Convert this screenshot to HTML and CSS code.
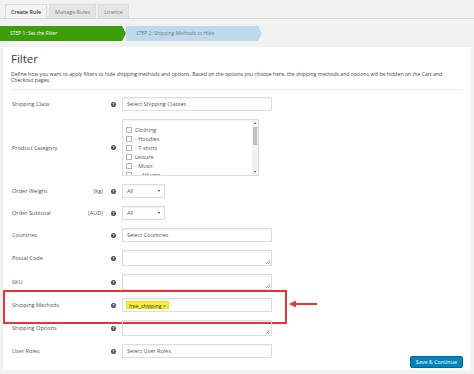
FILE: index.html
```html
<!DOCTYPE html>
<html>
<head>
    <title>Create Rule</title>
    <meta charset="utf-8">
    <link rel="stylesheet" href="styles.css">
</head>
<body>
<div class="tabs">
	<span class="tab active">Create Rule</span>
	<span class="tab">Manage Rules</span>
	<span class="tab">Licence</span>
</div>
<div class="steps">
	<div class="step done">STEP 1: Set the Filter</div>
	<div class="step next">STEP 2: Shipping Methods to Hide</div>
</div>
<div class="panel">
	<h2>Filter</h2>
	<p class="intro">Define how you want to apply filters to hide shipping methods and options. Based on the options you choose here, the shipping methods and options will be hidden on the Cart and Checkout pages.</p>
	<div class="rows">
		<div class="row">
			<div class="label"><span>Shipping Class</span></div>
			<span class="help">?</span>
			<div class="field input">Select Shipping Classes</div>
		</div>
		<div class="row">
			<div class="label"><span>Product Category</span></div>
			<span class="help">?</span>
			<div class="field multi">
				<div class="list">
					<div class="item"><span class="check"></span>Clothing</div>
					<div class="item"><span class="check"></span>- Hoodies</div>
					<div class="item"><span class="check"></span>- T-shirts</div>
					<div class="item"><span class="check"></span>Leisure</div>
					<div class="item"><span class="check"></span>- Music</div>
					<div class="item"><span class="check"></span>- - Albums</div>
				</div>
				<div class="scrollbar">
					<span class="up"></span>
					<span class="thumb"></span>
					<span class="down"></span>
				</div>
			</div>
		</div>
		<div class="row">
			<div class="label"><span>Order Weight</span><span class="unit">(kg)</span></div>
			<span class="help">?</span>
			<div class="field select">All<span class="caret"></span></div>
		</div>
		<div class="row">
			<div class="label"><span>Order Subtotal</span><span class="unit">(AUD)</span></div>
			<span class="help">?</span>
			<div class="field select">All<span class="caret"></span></div>
		</div>
		<div class="row">
			<div class="label"><span>Countries</span></div>
			<span class="help">?</span>
			<div class="field input">Select Countries</div>
		</div>
		<div class="row">
			<div class="label"><span>Postal Code</span></div>
			<span class="help">?</span>
			<div class="field input area"></div>
		</div>
		<div class="row">
			<div class="label"><span>SKU</span></div>
			<span class="help">?</span>
			<div class="field input area"></div>
		</div>
		<div class="row marked">
			<div class="label"><span>Shipping Methods</span></div>
			<span class="help">?</span>
			<div class="field input"><span class="tag">free_shipping ×</span></div>
			<svg class="pointer" width="29" height="8" viewBox="0 0 29 8">
				<path d="M6 4 H28" stroke="#e3363b" stroke-width="2"/>
				<path d="M0 4 L7 0.5 L7 7.5 Z" fill="#e3363b"/>
			</svg>
		</div>
		<div class="row">
			<div class="label"><span>Shipping Options</span></div>
			<span class="help">?</span>
			<div class="field input area"></div>
		</div>
		<div class="row">
			<div class="label"><span>User Roles</span></div>
			<span class="help">?</span>
			<div class="field input">Select User Roles</div>
		</div>
	</div>
	<div class="actions">
		<button class="save">Save &amp; Continue</button>
	</div>
</div>
</body>
</html>
```

FILE: styles.css
```css
* {
	box-sizing: border-box;
}

body {
	margin: 0;
	background: #f1f1f1;
	font-family: "Open Sans", "Noto Sans", sans-serif;
	color: #555;
}

/* tabs */
.tabs {
	display: flex;
	gap: 2px;
	height: 19px;
	padding: 4px 0 0 5px;
	border-bottom: 1px solid #d6d6d6;
}
.tab {
	padding: 0 5px;
	height: 14px;
	line-height: 14px;
	font-size: 5.4px;
	color: #777;
	background: #e4e4e4;
	border: 1px solid #dcdcdc;
	border-bottom: none;
}
.tab.active {
	background: #f3f3f3;
	color: #333;
	font-weight: 600;
}

/* steps */
.steps {
	display: flex;
	margin-top: 7px;
	height: 15px;
}
.step {
	height: 15px;
	line-height: 15px;
	padding-left: 10px;
	font-size: 5px;
	clip-path: polygon(0 0, calc(100% - 4px) 0, 100% 50%, calc(100% - 4px) 100%, 0 100%);
}
.step.done {
	width: 126px;
	background: #3e9d0b;
	color: #fff;
}
.step.next {
	width: 136px;
	background: #bcdaeb;
	color: #6a7f8c;
}

/* panel */
.panel {
	margin: 6px 3px 0 3px;
	padding: 4px 8px 2px 8px;
	background: #fff;
	box-shadow: 0 1px 1px rgba(0,0,0,.05);
}
.panel h2 {
	margin: 0;
	font-size: 11.5px;
	line-height: 15px;
	font-weight: 400;
	color: #3a3a3a;
}
.intro {
	margin: 6px 0 0 0;
	padding-bottom: 6px;
	border-bottom: 1px solid #ececec;
	font-size: 5.15px;
	line-height: 5.6px;
	color: #444;
}

/* rows */
.rows {
	display: flex;
	flex-direction: column;
	gap: 8px;
	margin-top: 7px;
}
.row {
	position: relative;
	display: flex;
	align-items: center;
}
.label {
	display: flex;
	justify-content: space-between;
	width: 91px;
	margin-left: 1px;
	font-size: 5.6px;
	color: #555;
}
.help {
	width: 5px;
	height: 5px;
	margin: 0 6px 0 8px;
	border-radius: 50%;
	background: #4a4a4a;
	color: #fff;
	font-size: 4px;
	line-height: 5px;
	font-weight: 700;
	text-align: center;
}
.field {
	border: 1px solid #ddd;
	font-size: 5.5px;
	color: #555;
	box-shadow: inset 0 1px 2px rgba(0,0,0,.06);
}
.input {
	display: flex;
	align-items: center;
	width: 150px;
	height: 14px;
	padding-left: 4px;
}
.area {
	position: relative;
	height: 16px;
}
.area::after {
	content: "";
	position: absolute;
	right: 1px;
	bottom: 1px;
	width: 4px;
	height: 4px;
	background: linear-gradient(135deg, transparent 45%, #aaa 45%, #aaa 55%, transparent 55%, transparent 75%, #aaa 75%, #aaa 85%, transparent 85%);
}
.select {
	display: flex;
	align-items: center;
	justify-content: space-between;
	width: 43px;
	height: 14px;
	padding: 0 4px 0 4px;
}
.caret {
	width: 0;
	height: 0;
	border-left: 1.5px solid transparent;
	border-right: 1.5px solid transparent;
	border-top: 2px solid #333;
}

/* category list */
.multi {
	display: flex;
	width: 137px;
	height: 57px;
	overflow: hidden;
}
.list {
	flex: 1;
	padding: 5px 0 0 3px;
	overflow: hidden;
}
.item {
	display: flex;
	align-items: center;
	height: 9px;
	font-size: 5.5px;
	color: #555;
}
.check {
	width: 6px;
	height: 6px;
	margin-right: 3px;
	border: 1px solid #b4b9be;
	background: #fff;
}
.scrollbar {
	display: flex;
	flex-direction: column;
	align-items: center;
	width: 6px;
	background: #f1f1f1;
	padding: 2px 0;
}
.scrollbar .up,
.scrollbar .down {
	width: 0;
	height: 0;
	border-left: 1.5px solid transparent;
	border-right: 1.5px solid transparent;
}
.scrollbar .up {
	border-bottom: 2px solid #555;
}
.scrollbar .down {
	margin-top: auto;
	border-top: 2px solid #555;
}
.scrollbar .thumb {
	width: 4px;
	height: 18px;
	margin-top: 3px;
	background: #c1c1c1;
}

/* highlighted row */
.tag {
	padding: 0 2px;
	height: 8px;
	line-height: 8px;
	margin-left: -1px;
	background: #f7f03a;
	border: 1px solid #e6dd2c;
	font-size: 5.2px;
	color: #333;
}
.marked::before {
	content: "";
	position: absolute;
	left: -8px;
	top: -8px;
	width: 280px;
	height: 30px;
	border: 2px solid #e3363b;
}
.pointer {
	position: absolute;
	left: 278px;
	top: 2px;
}

/* footer */
.actions {
	display: flex;
	justify-content: flex-end;
	margin-top: -2px;
}
.save {
	height: 12px;
	padding: 0 5px;
	background: #0085ba;
	border: 1px solid #006799;
	border-radius: 2px;
	color: #fff;
	font-family: "Open Sans", "Noto Sans", sans-serif;
	font-size: 5.4px;
	line-height: 10px;
}
```
